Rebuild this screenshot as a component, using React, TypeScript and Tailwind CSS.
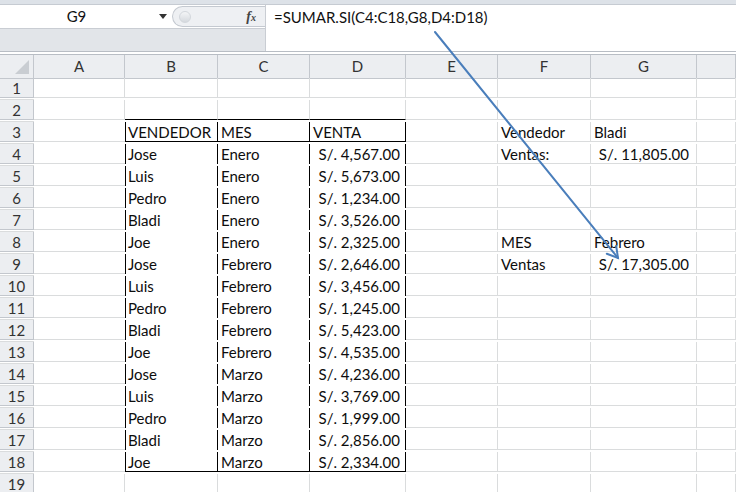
import React from 'react';

type Cell = { text?: string; money?: boolean };

const cols = ['A', 'B', 'C', 'D', 'E', 'F', 'G', ''];

const sales: [string, string, string][] = [
  ['Jose', 'Enero', '4,567.00'],
  ['Luis', 'Enero', '5,673.00'],
  ['Pedro', 'Enero', '1,234.00'],
  ['Bladi', 'Enero', '3,526.00'],
  ['Joe', 'Enero', '2,325.00'],
  ['Jose', 'Febrero', '2,646.00'],
  ['Luis', 'Febrero', '3,456.00'],
  ['Pedro', 'Febrero', '1,245.00'],
  ['Bladi', 'Febrero', '5,423.00'],
  ['Joe', 'Febrero', '4,535.00'],
  ['Jose', 'Marzo', '4,236.00'],
  ['Luis', 'Marzo', '3,769.00'],
  ['Pedro', 'Marzo', '1,999.00'],
  ['Bladi', 'Marzo', '2,856.00'],
  ['Joe', 'Marzo', '2,334.00'],
];

const side: Record<number, [Cell, Cell]> = {
  3: [{ text: 'Vendedor' }, { text: 'Bladi' }],
  4: [{ text: 'Ventas:' }, { text: '11,805.00', money: true }],
  8: [{ text: 'MES' }, { text: 'Febrero' }],
  9: [{ text: 'Ventas' }, { text: '17,305.00', money: true }],
};

const buildRow = (r: number): Cell[] => {
  const row: Cell[] = Array.from({ length: 8 }, () => ({}));
  if (r === 3) {
    row[1] = { text: 'VENDEDOR' };
    row[2] = { text: 'MES' };
    row[3] = { text: 'VENTA' };
  } else if (r >= 4 && r <= 18) {
    const [v, m, s] = sales[r - 4];
    row[1] = { text: v };
    row[2] = { text: m };
    row[3] = { text: s, money: true };
  }
  if (side[r]) {
    row[5] = side[r][0];
    row[6] = side[r][1];
  }
  return row;
};

const inTable = (r: number, c: number) => r >= 3 && r <= 18 && c >= 1 && c <= 3;

const cellBorder = (r: number, c: number) => {
  // table's left edge lives on B so the line is not cut by A's gridline
  if (r >= 3 && r <= 18 && c === 0) return 'border-b border-b-[#dadcdd]';
  const left = r >= 3 && r <= 18 && c === 1 ? 'border-l border-l-black' : '';
  const rightBlack = inTable(r, c);
  // bottom edge is black above the table, under the header and at the end
  const bottomBlack = (r === 2 || r === 3 || r === 18) && c >= 1 && c <= 3;
  const right = rightBlack ? 'border-r border-r-black' : 'border-r border-r-[#dadcdd]';
  // no gridline between rows inside the bordered table
  const bottom = bottomBlack ? 'border-b border-b-black' : inTable(r, c) ? '' : 'border-b border-b-[#dadcdd]';
  return `${left} ${right} ${bottom}`;
};

const FormulaBar = () => (
  <div className="flex flex-col">
    <div className="h-[5px] bg-[#dde2e8] border-b border-[#c6cbd2]" />
    <div className="flex h-[46px]">
      <div className="w-[265px] flex flex-col">
        <div className="flex h-[24px] bg-white border-b border-[#c9cdd3]">
          <div className="w-[153px] flex items-center justify-center text-[15px] text-[#111]">G9</div>
          <div className="w-[19px] flex items-center justify-center">
            <svg width="8" height="5" viewBox="0 0 8 5">
              <path d="M0 0 L8 0 L4 5 Z" fill="#333" />
            </svg>
          </div>
          <div className="flex-1 flex items-center bg-[#eef0f3] rounded-l-[12px] border border-r-0 border-[#c4c9d0] mt-[1px] mb-[1px] pl-[6px] pr-[9px]">
            <div className="w-[12px] h-[12px] rounded-full bg-gradient-to-b from-[#f4f5f7] to-[#d5d9de] border border-[#d3d7dc]" />
            <span className="ml-auto text-[14px] italic font-bold text-[#444]" style={{ fontFamily: '"Liberation Serif", serif' }}>
              f<span className="text-[10px]">x</span>
            </span>
          </div>
        </div>
        <div className="flex-1 bg-[#e2e5e9]" />
      </div>
      <div className="flex-1 bg-white border-l border-[#c9cdd3] pl-[8px] pt-[2px] text-[15px] text-[#111] leading-[20px]">
        =SUMAR.SI(C4:C18,G8,D4:D18)
      </div>
    </div>
    <div className="h-[4px] bg-white border-y border-[#b8bdc4]" />
  </div>
);

const gridCols = 'grid grid-cols-[34px_91px_93px_92px_96px_92px_93px_106px_1fr]';

const Sheet = () => (
  <div>
    <div className={`${gridCols} h-[23px] bg-[#eceef1]`}>
      <div className="relative border-r border-b border-[#c3c7cd]">
        <svg className="absolute right-[4px] bottom-[4px]" width="14" height="14" viewBox="0 0 14 14">
          <path d="M14 0 L14 14 L0 14 Z" fill="#c9cdd2" />
        </svg>
      </div>
      {cols.map((c, i) => (
        <div key={i} className="flex items-center justify-center border-r border-b border-[#c3c7cd] text-[15px] text-[#333]">
          {c}
        </div>
      ))}
      <div className="border-b border-[#c3c7cd]" />
    </div>
    {Array.from({ length: 19 }, (_, i) => i + 1).map((r) => {
      const row = buildRow(r);
      return (
        <div key={r} className={`${gridCols} h-[22px] leading-[18px]`}>
          <div className="flex items-center justify-center bg-[#eceef1] border-r border-b border-[#c3c7cd] text-[15px] text-[#333]">
            {r}
          </div>
          {row.map((cell, c) => (
            <div key={c} className={`flex items-center ${cellBorder(r, c)} text-[15px] text-[#0d0d0d] whitespace-nowrap overflow-hidden`}>
              {cell.money ? (
                <span className={`w-full text-right ${c === 6 ? 'pr-[7px]' : 'pr-[5px]'}`}>S/. {cell.text}</span>
              ) : (
                <span className={c === 1 && r >= 3 && r <= 18 ? 'pl-[2px]' : 'pl-[3px]'}>{cell.text}</span>
              )}
            </div>
          ))}
          <div className="border-b border-[#dadcdd]" />
        </div>
      );
    })}
  </div>
);

const Arrow = () => (
  <svg className="absolute inset-0 pointer-events-none" width="736" height="492" viewBox="0 0 736 492">
    <g stroke="#4a7ebb" strokeWidth="2" fill="none" strokeLinecap="round">
      <line x1="435" y1="32" x2="618" y2="258" />
      <path d="M606.8 253.7 L618 258 L616.2 246.1" />
    </g>
  </svg>
);

const App = () => (
  <div className="relative w-[736px] h-[492px] overflow-hidden bg-white" style={{ fontFamily: 'Lato, "Liberation Sans", sans-serif' }}>
    <FormulaBar />
    <Sheet />
    <Arrow />
  </div>
);

export default App;
